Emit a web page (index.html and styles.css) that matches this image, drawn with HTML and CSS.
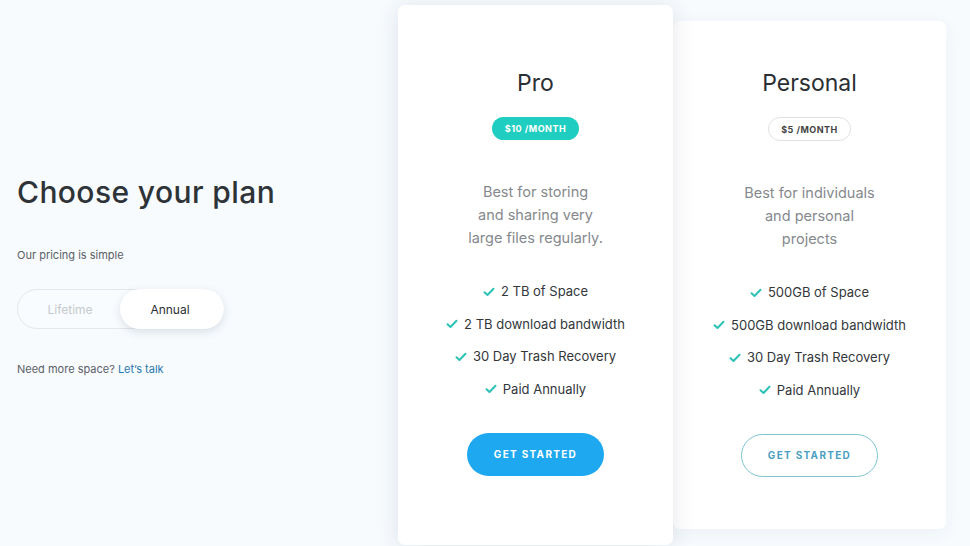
FILE: index.html
```html
<!DOCTYPE html>
<html>
<head>
<meta charset="utf-8">
<link rel="stylesheet" href="styles.css">
</head>
<body>
<div class="page">
  <section class="intro">
    <h1 class="title">Choose your plan</h1>
    <p class="sub">Our pricing is simple</p>
    <div class="toggle">
      <span class="opt">Lifetime</span>
      <span class="opt active">Annual</span>
    </div>
    <p class="more">Need more space? <a class="link" href="#">Let’s talk</a></p>
  </section>
  <div class="cards">
    <div class="card pro">
      <h2 class="plan">Pro</h2>
      <span class="badge filled">$10 /MONTH</span>
      <p class="desc">Best for storing<br>and sharing very<br>large files regularly.</p>
      <ul class="features">
        <li><svg class="check" viewBox="0 0 12 10"><path d="M1.5 5.2 L4.5 8 L10.5 1.8" /></svg>2 TB of Space</li>
        <li><svg class="check" viewBox="0 0 12 10"><path d="M1.5 5.2 L4.5 8 L10.5 1.8" /></svg>2 TB download bandwidth</li>
        <li><svg class="check" viewBox="0 0 12 10"><path d="M1.5 5.2 L4.5 8 L10.5 1.8" /></svg>30 Day Trash Recovery</li>
        <li><svg class="check" viewBox="0 0 12 10"><path d="M1.5 5.2 L4.5 8 L10.5 1.8" /></svg>Paid Annually</li>
      </ul>
      <a class="btn solid" href="#">GET STARTED</a>
    </div>
    <div class="card personal">
      <h2 class="plan">Personal</h2>
      <span class="badge outline">$5 /MONTH</span>
      <p class="desc">Best for individuals<br>and personal<br>projects</p>
      <ul class="features">
        <li><svg class="check" viewBox="0 0 12 10"><path d="M1.5 5.2 L4.5 8 L10.5 1.8" /></svg>500GB of Space</li>
        <li><svg class="check" viewBox="0 0 12 10"><path d="M1.5 5.2 L4.5 8 L10.5 1.8" /></svg>500GB download bandwidth</li>
        <li><svg class="check" viewBox="0 0 12 10"><path d="M1.5 5.2 L4.5 8 L10.5 1.8" /></svg>30 Day Trash Recovery</li>
        <li><svg class="check" viewBox="0 0 12 10"><path d="M1.5 5.2 L4.5 8 L10.5 1.8" /></svg>Paid Annually</li>
      </ul>
      <a class="btn ghost" href="#">GET STARTED</a>
    </div>
  </div>
</div>
</body>
</html>
```
FILE: styles.css
```css
* { box-sizing: border-box; }
html, body { margin: 0; padding: 0; }
body {
  background: #f7fbfe;
  font-family: "Inter", "Noto Sans", sans-serif;
  color: #2b2f33;
  width: 970px;
  height: 546px;
  overflow: hidden;
}
.page {
  display: flex;
  align-items: flex-start;
  height: 546px;
}
.intro {
  width: 398px;
  padding: 170px 0 0 17px;
}
.title {
  margin: 0;
  font-family: "Inter", sans-serif;
  font-weight: 500;
  font-size: 30px;
  line-height: 44px;
  color: #2e3338;
  letter-spacing: 0.4px;
}
.sub {
  margin: 34px 0 0;
  font-size: 11px;
  color: #5b6066;
  line-height: 14px;
}
.toggle {
  margin-top: 27px;
  width: 207px;
  height: 40px;
  border: 1px solid #e4e8ec;
  border-radius: 20px;
  display: flex;
  align-items: stretch;
  background: #f9fcfe;
}
.opt {
  flex: 1;
  display: flex;
  align-items: center;
  justify-content: center;
  font-size: 12px;
  color: #c5c9cd;
  padding-left: 2px;
}
.opt.active {
  flex: 0 0 104px;
  background: #fff;
  color: #2b2f33;
  border-radius: 20px;
  margin: -1px -1px -1px 0;
  padding: 0 4px 0 0;
  box-shadow: 0 3px 8px rgba(40, 60, 90, 0.14);
}
.more {
  margin: 33px 0 0;
  font-size: 11px;
  color: #5b6066;
}
.link { color: #2a78b0; text-decoration: none; }

.cards {
  display: flex;
  align-items: flex-start;
}
.card {
  background: #fff;
  border-radius: 7px;
  display: flex;
  flex-direction: column;
  align-items: center;
}
.pro {
  position: relative;
  z-index: 2;
  width: 275px;
  height: 540px;
  margin-top: 5px;
  padding-top: 63px;
  box-shadow: 0 2px 22px rgba(40, 50, 70, 0.12);
}
.personal {
  width: 273px;
  height: 508px;
  margin-top: 21px;
  padding-top: 47px;
  box-shadow: 0 4px 18px rgba(40, 60, 90, 0.05);
}
.plan {
  margin: 0;
  font-weight: 400;
  font-size: 23px;
  line-height: 30px;
  color: #2b2f33;
}
.badge {
  margin-top: 19px;
  height: 23px;
  border-radius: 12px;
  font-size: 9px;
  font-weight: 700;
  letter-spacing: 0.5px;
  display: inline-flex;
  align-items: center;
  justify-content: center;
}
.badge.filled {
  width: 87px;
  background: #1fcec0;
  color: #fff;
}
.badge.outline {
  width: 83px;
  height: 24px;
  background: #fff;
  border: 1px solid #dfe2e5;
  color: #444;
}
.desc {
  margin: 40px 0 0;
  text-align: center;
  font-size: 14.5px;
  line-height: 23px;
  color: #85898d;
}
.features {
  list-style: none;
  margin: 33px 0 0;
  padding: 0;
  display: flex;
  flex-direction: column;
  align-items: center;
  gap: 13.5px;
}
.features li {
  display: flex;
  align-items: center;
  gap: 6px;
  font-size: 13px;
  line-height: 19px;
  color: #33373b;
}
.check {
  width: 12px;
  height: 10px;
  fill: none;
  stroke: #2cc2b5;
  stroke-width: 2;
  stroke-linecap: round;
  stroke-linejoin: round;
}
.btn {
  margin-top: 34px;
  width: 137px;
  height: 43px;
  border-radius: 22px;
  display: flex;
  align-items: center;
  justify-content: center;
  font-size: 10px;
  font-weight: 700;
  letter-spacing: 1.3px;
  text-decoration: none;
}
.btn.solid {
  background: #1ea8ef;
  color: #fff;
}
.btn.ghost {
  background: #fff;
  border: 1px solid #7cc3cf;
  color: #4b9fc2;
}
```
